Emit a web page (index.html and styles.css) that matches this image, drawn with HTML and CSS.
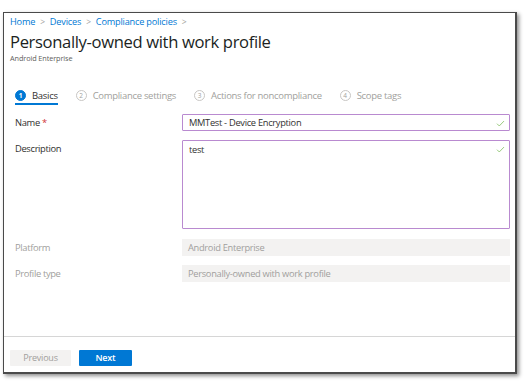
FILE: index.html
```html
<!DOCTYPE html>
<html>
<head>
<meta charset="utf-8">
<link rel="stylesheet" href="styles.css">
</head>
<body>
<div class="frame">
  <div class="main">
    <div class="header">
      <div class="crumbs">
        <span class="crumb">Home</span><span class="sep">&gt;</span>
        <span class="crumb">Devices</span><span class="sep">&gt;</span>
        <span class="crumb">Compliance policies</span><span class="sep">&gt;</span>
      </div>
      <h1 class="title">Personally-owned with work profile</h1>
      <div class="subtitle">Android Enterprise</div>
    </div>
    <div class="tabs">
      <div class="tab active"><span class="num">1</span><span class="tlabel">Basics</span></div>
      <div class="tab"><span class="num">2</span><span class="tlabel">Compliance settings</span></div>
      <div class="tab"><span class="num">3</span><span class="tlabel">Actions for noncompliance</span></div>
      <div class="tab"><span class="num">4</span><span class="tlabel">Scope tags</span></div>
    </div>
    <div class="form">
      <div class="label">Name <span class="req">*</span></div>
      <div class="field input">MMTest - Device Encryption<svg class="check" viewBox="0 0 10 8"><path d="M1 4.2 L3.6 6.8 L9 1.2" fill="none" stroke="#7dbb5a" stroke-width="0.9"/></svg></div>
      <div class="label">Description</div>
      <div class="field textarea">test<svg class="check" viewBox="0 0 10 8"><path d="M1 4.2 L3.6 6.8 L9 1.2" fill="none" stroke="#7dbb5a" stroke-width="0.9"/></svg></div>
      <div class="label dim">Platform</div>
      <div class="field disabled">Android Enterprise</div>
      <div class="label dim">Profile type</div>
      <div class="field disabled">Personally-owned with work profile</div>
    </div>
  </div>
  <div class="footer">
    <button class="btn prev">Previous</button>
    <button class="btn next">Next</button>
  </div>
</div>
</body>
</html>
```
FILE: styles.css
```css
html, body {
  margin: 0;
  padding: 0;
  background: #ffffff;
}
body {
  font-family: "Open Sans", "Noto Sans", sans-serif;
  color: #323130;
  width: 532px;
  height: 386px;
  overflow: hidden;
}
.frame {
  box-sizing: border-box;
  margin: 12px 0 0 3px;
  width: 514px;
  height: 362px;
  border: 1px solid #4a4a4a;
  border-right-width: 2px;
  border-bottom-width: 2px;
  box-shadow: 2px 2px 4px rgba(0, 0, 0, 0.45);
  display: flex;
  flex-direction: column;
  background: #fff;
}
.main {
  flex: 1;
}
.header {
  padding: 2px 0 0 6px;
}
.crumbs {
  font-size: 9.2px;
  letter-spacing: -0.2px;
  line-height: 13px;
  display: flex;
  align-items: center;
}
.crumb {
  color: #0078d4;
}
.sep {
  color: #a19f9d;
  margin: 0 5px;
  font-size: 8.5px;
}
.title {
  margin: 3px 0 0 0;
  font-weight: 400;
  font-size: 16.6px;
  line-height: 22px;
  color: #201f1e;
  letter-spacing: -0.35px;
}
.subtitle {
  font-size: 7.3px;
  line-height: 10px;
  color: #605e5c;
  margin-top: 0;
  letter-spacing: -0.1px;
}
.tabs {
  display: flex;
  margin: 24px 0 0 11px;
  gap: 18px;
}
.tab {
  display: flex;
  align-items: center;
  gap: 6px;
  height: 17px;
  padding-bottom: 1px;
  font-size: 9.5px;
  letter-spacing: -0.3px;
  color: #a19f9d;
}
.tab.active {
  color: #323130;
  border-bottom: 2px solid #0078d4;
  padding-bottom: 0;
  height: 16px;
}
.num {
  box-sizing: border-box;
  width: 11px;
  height: 11px;
  border-radius: 50%;
  border: 1px solid #c8c6c4;
  font-size: 6.5px;
  letter-spacing: 0;
  line-height: 9px;
  text-align: center;
  color: #a19f9d;
}
.tab.active .num {
  background: #0078d4;
  border-color: #0078d4;
  color: #fff;
  font-weight: 700;
}
.form {
  display: grid;
  grid-template-columns: 167px 328px;
  margin: 9px 0 0 11px;
  row-gap: 9px;
}
.label {
  font-size: 9.4px;
  letter-spacing: -0.35px;
  line-height: 17px;
  color: #323130;
}
.label.dim {
  color: #a19f9d;
}
.req {
  color: #d13438;
}
.field {
  box-sizing: border-box;
  position: relative;
  font-size: 9.3px;
  letter-spacing: -0.3px;
  line-height: 15px;
  padding: 0 6px;
  height: 17px;
}
.input, .textarea {
  border: 1px solid #b98ad0;
  border-radius: 1px;
  color: #323130;
}
.textarea {
  height: 89px;
  padding-top: 1px;
  margin-bottom: 1px;
}
.disabled {
  background: #f3f2f1;
  color: #a19f9d;
  height: 17px;
  line-height: 17px;
}
.check {
  position: absolute;
  right: 4px;
  top: 5px;
  width: 9px;
  height: 7px;
}
.footer {
  border-top: 1px solid #d6d6d6;
  height: 36px;
  display: flex;
  align-items: flex-start;
  padding: 13px 0 0 6px;
  box-sizing: border-box;
  gap: 8px;
}
.btn {
  font-family: "Open Sans", "Noto Sans", sans-serif;
  font-size: 9px;
  letter-spacing: -0.2px;
  height: 16px;
  border: none;
  border-radius: 1px;
  padding: 0;
  line-height: 16px;
}
.prev {
  width: 61px;
  background: #f3f2f1;
  color: #a19f9d;
}
.next {
  width: 53px;
  background: #0078d4;
  color: #fff;
  font-weight: 600;
}
```
